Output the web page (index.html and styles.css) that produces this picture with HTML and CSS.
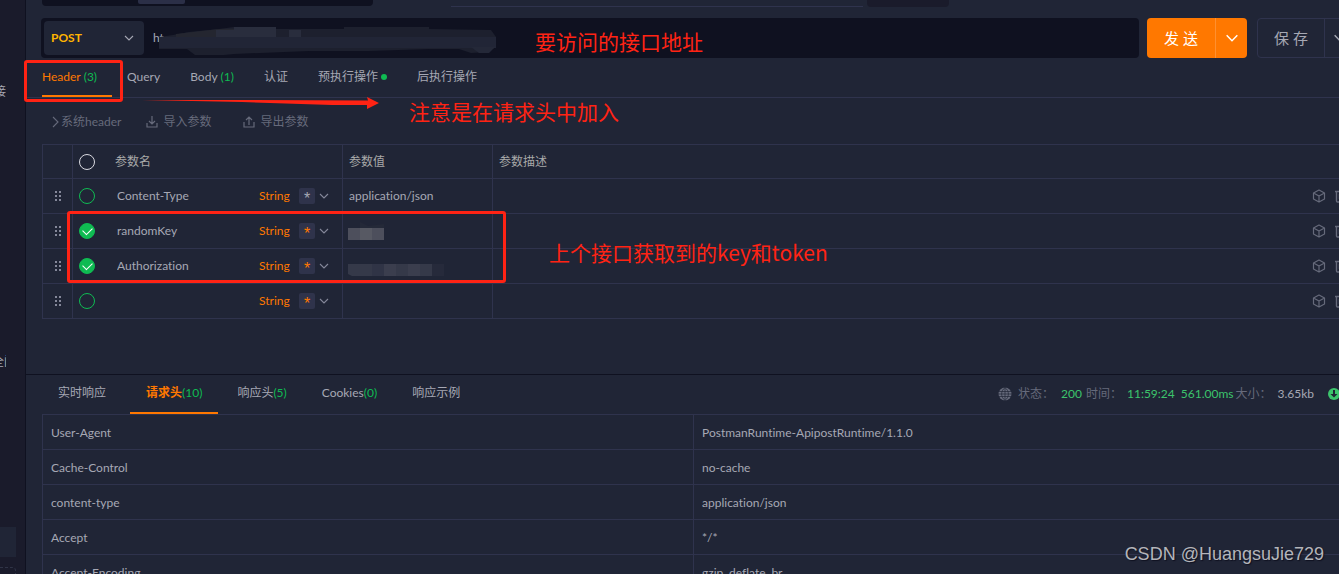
FILE: index.html
```html
<!DOCTYPE html>
<html lang="zh-CN">
<head>
<meta charset="utf-8">
<title>接口调试</title>
<link rel="stylesheet" href="styles.css">
</head>
<body>
<svg class="defs" aria-hidden="true">
  <symbol id="chevron" viewBox="0 0 12 12"><path d="M2 4l4 4 4-4" fill="none" stroke="currentColor" stroke-width="1.1"/></symbol>
  <symbol id="cube" viewBox="0 0 14 14"><path d="M7 1l5.500 3v6L7 13l-5.500-3V4zM1.500 4L7 7l5.500-3M7 7v6" fill="none" stroke="currentColor" stroke-width="1.200" stroke-linejoin="round"/></symbol>
  <symbol id="trash" viewBox="0 0 14 14"><path d="M0 2.500h14M1.500 2.500v9.500q0 1 1 1h9q1 0 1-1V2.500M4.500 5v5M9.500 5v5" fill="none" stroke="currentColor" stroke-width="1.400"/></symbol>
  <symbol id="grip" viewBox="0 0 8 12"><path d="M1 1h2v2H1zM5 1h2v2H5zM1 5h2v2H1zM5 5h2v2H5zM1 9h2v2H1zM5 9h2v2H5z" fill="currentColor"/></symbol>
</svg>
<div class="app">
  <aside class="sidebar">
    <span class="side-text side-first">接</span>
    <span class="side-text side-second">全门</span>
    <div class="side-item"></div>
    <div class="side-drop"></div>
  </aside>
  <main class="main">
    <div class="strip">
      <div class="segment"><span class="segment-on"></span></div>
      <div class="name-line"></div>
      <div class="strip-box"></div>
    </div>
    <form class="request">
      <div class="address">
        <label class="method">
          <select aria-label="请求方法"><option>POST</option></select>
          <svg class="i12"><use href="#chevron"/></svg>
        </label>
        <input class="url" type="text" value="ht" aria-label="接口地址">
        <svg class="scribble" viewBox="0 0 340 34" aria-hidden="true">
          <path d="M0 12L14 10L30 7L60 4L75 2H115V4H185V2H270V4L332 5L337 12V22L328 27L312 28L300 24H270L210 26H150L75 29L65 30H36L28 24L0 24z" fill="#1d202e"/>
          <path d="M0 12H337V23H0z" fill="#212536"/>
          <path d="M17 9L60 4H115V12H17z" fill="#242630"/>
          <path d="M57 5h18V2h42v10H57zM130 5h12v7h-12z" fill="#292d3d"/>
          <path d="M312 22h24l-6 6h-10z" fill="#242838"/>
        </svg>
      </div>
      <div class="send">
        <button type="button" class="send-main">发 送</button>
        <button type="button" class="send-more" aria-label="更多发送"><svg class="i16"><use href="#chevron"/></svg></button>
      </div>
      <div class="save">
        <button type="button" class="save-main">保 存</button>
        <button type="button" class="save-more" aria-label="更多保存"><svg class="i16"><use href="#chevron"/></svg></button>
      </div>
    </form>
    <nav class="tabs">
      <button class="tab active">Header <span class="count">(3)</span></button>
      <button class="tab">Query</button>
      <button class="tab">Body <span class="count">(1)</span></button>
      <button class="tab">认证</button>
      <button class="tab">预执行操作<i class="dot"></i></button>
      <button class="tab">后执行操作</button>
    </nav>
    <div class="tools">
      <button class="tool system"><svg class="arrow-right" viewBox="0 0 8 12"><path d="M1 1l5 5-5 5" fill="none" stroke="currentColor" stroke-width="1.100"/></svg>系统header</button>
      <button class="tool"><svg class="i12" viewBox="0 0 12 12"><path d="M6 0v8M3 5l3 3 3-3M1 7v4h10V7" fill="none" stroke="currentColor" stroke-width="1.200"/></svg>导入参数</button>
      <button class="tool"><svg class="i12" viewBox="0 0 12 12"><path d="M6 9V1M3 4l3-3 3 3M1 6v5h10V6" fill="none" stroke="currentColor" stroke-width="1.200"/></svg>导出参数</button>
    </div>
    <section class="params">
      <table class="grid">
        <colgroup><col class="c-grip"><col class="c-name"><col class="c-value"><col></colgroup>
        <thead>
          <tr><th></th><th><div class="name-cell head"><input type="checkbox" class="check all" aria-label="全选"><span>参数名</span></div></th><th>参数值</th><th>参数描述</th></tr>
        </thead>
        <tbody>
          <tr><td class="grip"><svg><use href="#grip"/></svg></td>
            <td><div class="name-cell"><input type="checkbox" class="check" aria-label="启用 Content-Type"><input class="field" type="text" value="Content-Type" aria-label="参数名"><select class="type" aria-label="类型"><option>String</option></select><button class="star off" aria-label="必填">*</button><svg class="i12"><use href="#chevron"/></svg></div></td>
            <td><input class="field" type="text" value="application/json" aria-label="参数值"></td>
            <td><div class="actions"><svg><use href="#cube"/></svg><svg><use href="#trash"/></svg></div></td></tr>
          <tr><td class="grip"><svg><use href="#grip"/></svg></td>
            <td><div class="name-cell"><input type="checkbox" class="check" checked aria-label="启用 randomKey"><input class="field" type="text" value="randomKey" aria-label="参数名"><select class="type" aria-label="类型"><option>String</option></select><button class="star" aria-label="必填">*</button><svg class="i12"><use href="#chevron"/></svg></div></td>
            <td><svg class="mosaic" viewBox="0 0 100 24"><path d="M12 3l8 4 16-2v8H12z" fill="#242938"/><path d="M0 9h36v12H0z" fill="#4d4f5c"/><path d="M12 9h12v12H12z" fill="#575963"/></svg></td>
            <td><div class="actions"><svg><use href="#cube"/></svg><svg><use href="#trash"/></svg></div></td></tr>
          <tr><td class="grip"><svg><use href="#grip"/></svg></td>
            <td><div class="name-cell"><input type="checkbox" class="check" checked aria-label="启用 Authorization"><input class="field" type="text" value="Authorization" aria-label="参数名"><select class="type" aria-label="类型"><option>String</option></select><button class="star" aria-label="必填">*</button><svg class="i12"><use href="#chevron"/></svg></div></td>
            <td><svg class="mosaic" viewBox="0 0 100 24"><path d="M0 10h84v12H4l-4-2z" fill="#353949"/><path d="M36 10h12v12H36zM60 10h12v12H60z" fill="#3b3e4e"/><path d="M24 10h12v12H24z" fill="#303446"/><path d="M84 10h12v12H84z" fill="#262a3b"/></svg></td>
            <td><div class="actions"><svg><use href="#cube"/></svg><svg><use href="#trash"/></svg></div></td></tr>
          <tr><td class="grip"><svg><use href="#grip"/></svg></td>
            <td><div class="name-cell"><input type="checkbox" class="check" aria-label="启用新参数"><input class="field" type="text" value="" aria-label="参数名"><select class="type" aria-label="类型"><option>String</option></select><button class="star" aria-label="必填">*</button><svg class="i12"><use href="#chevron"/></svg></div></td>
            <td></td>
            <td><div class="actions"><svg><use href="#cube"/></svg><svg><use href="#trash"/></svg></div></td></tr>
        </tbody>
      </table>
    </section>
    <section class="response">
      <div class="response-bar">
        <nav class="rtabs">
          <button class="rtab">实时响应</button>
          <button class="rtab active">请求头<span class="count">(10)</span></button>
          <button class="rtab">响应头<span class="count">(5)</span></button>
          <button class="rtab">Cookies<span class="count">(0)</span></button>
          <button class="rtab">响应示例</button>
        </nav>
        <div class="status">
          <svg class="globe" viewBox="0 0 14 14"><circle cx="7" cy="7" r="6.500" fill="#666a7b"/><path d="M0 4.500h14M0 9.500h14M0 7h14M7 0v14M7 .5C2.500 4 2.500 10 7 13.500M7 .5C11.500 4 11.500 10 7 13.500" fill="none" stroke="#202536" stroke-width=".7"/></svg>
          <span class="label">状态：</span><span class="good code">200</span>
          <span class="label time">时间：</span><span class="good">11:59:24</span><span class="good ms">561.00ms</span>
          <span class="label">大小：</span><span>3.65kb</span>
          <svg class="download" viewBox="0 0 12 12"><circle cx="6" cy="6" r="6" fill="#3cc46c"/><path d="M5 2h2v4h2.500L6 9.500 2.500 6H5z" fill="#202536"/></svg>
        </div>
      </div>
      <table class="headers">
        <tbody>
          <tr><td>User-Agent</td><td>PostmanRuntime-ApipostRuntime/1.1.0</td></tr>
          <tr><td>Cache-Control</td><td>no-cache</td></tr>
          <tr><td>content-type</td><td>application/json</td></tr>
          <tr><td>Accept</td><td>*/*</td></tr>
          <tr><td>Accept-Encoding</td><td>gzip, deflate, br</td></tr>
        </tbody>
      </table>
    </section>
  </main>
</div>
<div class="frame frame-tab"></div>
<div class="frame frame-rows"></div>
<svg class="pointer" viewBox="0 0 240 16" aria-hidden="true"><path d="M0 4L100 4L226 4.500L225 1L237 7L225 13L225 9L190 9L100 6z" fill="#ff2314"/></svg>
<p class="note note-url">要访问的接口地址</p>
<p class="note note-header">注意是在请求头中加入</p>
<p class="note note-token">上个接口获取到的key和token</p>
<p class="watermark">CSDN @HuangsuJie729</p>
</body>
</html>
```
FILE: styles.css
```css
* { box-sizing: border-box; }
html, body { height: 100%; }
body {
  margin: 0;
  overflow: hidden;
  position: relative;
  background: #202536;
  color: #a6a8b4;
  font: 12px/18px Lato, "Noto Sans CJK SC", sans-serif;
  font-variant-ligatures: none;
}
button, input, select {
  margin: 0;
  padding: 0;
  border: 0;
  background: none;
  color: inherit;
  font: inherit;
  font-variant-ligatures: none;
  appearance: none;
  border-radius: 0;
}
svg { display: block; flex: none; }
.defs { position: absolute; width: 0; height: 0; }
.i12 { width: 12px; height: 12px; }
.i16 { width: 16px; height: 16px; }
.app { display: flex; height: 100%; }

.sidebar {
  flex: none;
  width: 26px;
  background: #1a1b2b;
  border-right: 1px solid #0f1120;
  display: flex;
  flex-direction: column;
  overflow: hidden;
}
.sidebar > * { flex: none; }
.side-text {
  display: flex;
  justify-content: flex-end;
  width: 6px;
  overflow: hidden;
  white-space: nowrap;
}
.side-first { margin-top: 83px; }
.side-second { margin-top: 252px; justify-content: flex-start; text-indent: -8px; }
.side-item { width: 16px; height: 30px; margin-top: 156px; background: #202536; }
.side-drop {
  width: 16px;
  height: 30px;
  margin-top: 10px;
  border: 1px dashed #303447;
  border-left: 0;
  border-radius: 0 4px 0 0;
}

.main { flex: 1; min-width: 0; margin-right: -6px; }
.strip { display: flex; height: 18px; padding-left: 16px; align-items: flex-start; }
.segment { width: 331px; height: 6px; background: #0f1120; border-radius: 0 0 4px 4px; }
.segment-on { display: block; width: 47px; height: 4px; margin-left: 96px; background: #2b2f47; border-radius: 0 0 2px 2px; }
.name-line { width: 412px; height: 7px; margin-left: 78px; border-bottom: 1px solid #2f334d; }
.strip-box { width: 82px; height: 7px; margin-left: 4px; background: #1a1b2b; border-radius: 0 0 4px 4px; }

.request { display: flex; height: 40px; padding-left: 15px; }
.address {
  position: relative;
  flex: 1;
  display: flex;
  align-items: center;
  padding: 3px;
  background: #0f1120;
  border-radius: 4px;
}
.method {
  display: flex;
  align-items: center;
  width: 100px;
  height: 34px;
  padding: 0 9px 0 7px;
  background: #202536;
  border-radius: 4px;
}
.method select { flex: 1; color: #ffb400; font-weight: 700; }
.method svg { color: #a6a8b4; }
.url { flex: 1; min-width: 0; padding-left: 9px; }
.scribble { position: absolute; left: 118px; top: 7px; width: 340px; height: 34px; }
.send, .save { display: flex; height: 40px; border-radius: 4px; }
.send { margin-left: 8px; width: 100px; background: #ff7800; color: #fff; }
.send-main, .save-main { flex: 1; font-size: 15px; }
.send-more { width: 32px; border-left: 1px solid #ff9030; }
.save { margin-left: 10px; width: 88px; border: 1px solid #2f334d; }
.save-more { width: 20px; border-left: 1px solid #2f334d; }
.send-more svg { margin: 0 auto; }
.save-more svg { margin-left: 7px; }

.tabs { display: flex; gap: 15px; height: 40px; padding-left: 16px; border-bottom: 1px solid #2f334d; }
.tab { display: flex; align-items: center; gap: 3px; padding: 0 15px 1px 0; white-space: nowrap; }
.tab.active { color: #ff7800; border-bottom: 2px solid #ff7800; padding-bottom: 0; }
.count { color: #0fbb52; font-weight: 400; }
.dot { width: 6px; height: 6px; border-radius: 50%; background: #0fbb52; }

.tools { display: flex; align-items: center; gap: 25px; height: 46px; padding: 1px 0 0 26px; color: #666a7b; }
.tool { display: flex; align-items: center; gap: 5px; padding-right: 7px; }
.tool.system { gap: 1px; padding-right: 0; }
.arrow-right { width: 8px; height: 12px; }

.params { height: 231px; padding-left: 16px; border-bottom: 1px solid #0f1120; }
table { width: 100%; table-layout: fixed; border-collapse: collapse; }
th, td { height: 35px; padding: 0 6px; border: 1px solid #2f334d; text-align: left; font-weight: 400; }
th { height: 34px; color: #a9a9a9; }
.c-grip { width: 30px; }
.c-name { width: 270px; }
.c-value { width: 150px; }
.grip svg { width: 8px; height: 12px; margin: 0 auto; color: #85889a; }
.name-cell { display: flex; align-items: center; }
.name-cell .field { flex: 1; min-width: 0; }
.name-cell .i12 { margin: 0 6px 0 3px; color: #85889a; }
.field { width: 100%; }
.check {
  flex: none;
  width: 16px;
  height: 16px;
  margin-right: 22px;
  border: 1px solid #0fbb52;
  border-radius: 50%;
  display: grid;
  place-items: center;
}
.check.all { border-color: #d9d9e0; margin-right: 20px; }
.check:checked { background: #0fbb52; }
.check:checked::after {
  content: "";
  width: 8px;
  height: 5px;
  margin-bottom: 2px;
  border: solid #fff;
  border-width: 0 0 1px 1px;
  transform: rotate(-45deg);
}
.type { color: #ff7800; margin-right: 9px; }
.star {
  width: 16px;
  height: 16px;
  background: #2f334b;
  color: #ff7800;
  border-radius: 2px;
  font: 16px/22px "Liberation Sans", sans-serif;
}
.star.off { color: #a6a8b4; }
.mosaic { width: 100px; height: 24px; margin-left: -1px; }
.actions { display: flex; justify-content: flex-end; gap: 9px; margin-right: -11px; color: #666a7b; }
.actions svg { width: 14px; height: 14px; }

.response-bar { display: flex; justify-content: space-between; height: 39px; padding-right: 5px; }
.rtabs { display: flex; gap: 3px; }
.rtab { padding: 0 16px 3px; white-space: nowrap; }
.rtab:first-child { margin: 0 5px 0 16px; }
.rtab.active { color: #ff7800; font-weight: 700; border-bottom: 2px solid #ff7800; padding-bottom: 1px; }
.status { display: flex; align-items: center; padding-bottom: 1px; white-space: nowrap; }
.label { color: #666a7b; margin-right: 6px; }
.label.time { margin-right: 5px; }
.good { color: #3cc46c; }
.code { margin: 0 4px 0 1px; }
.ms { margin: 0 2px 0 6px; }
.globe { width: 14px; height: 14px; margin-right: 6px; }
.download { width: 12px; height: 12px; margin-left: 14px; }
.headers { width: calc(100% - 16px); margin-left: 16px; }
.headers td { padding: 2px 8px 0; }

.frame { position: absolute; border: 3px solid #ff2314; border-radius: 3px; }
.frame-tab { left: 24px; top: 60px; width: 99px; height: 42px; }
.frame-rows { left: 67px; top: 211px; width: 439px; height: 72px; }
.pointer { position: absolute; left: 142px; top: 96px; width: 240px; height: 16px; }
.note { position: absolute; margin: 0; color: #ff2314; font-family: "Noto Sans CJK SC", sans-serif; font-size: 21px; line-height: 30px; white-space: nowrap; }
.note-url { left: 535px; top: 26px; }
.note-header { left: 409px; top: 96px; }
.note-token { left: 549px; top: 237px; }
.watermark {
  position: absolute;
  right: 15px;
  bottom: 8px;
  margin: 0;
  color: #b4b5ba;
  font: 18px/24px "Liberation Sans", sans-serif;
  text-shadow: 1px 1px 1px #0f1120;
}
```
